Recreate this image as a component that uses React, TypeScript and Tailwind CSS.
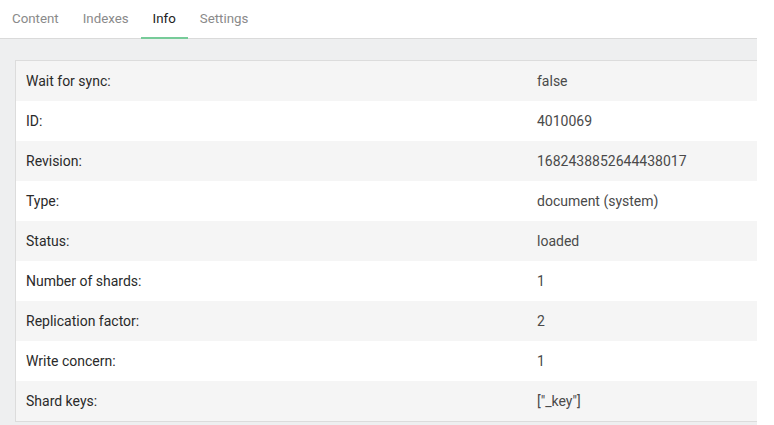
const tabs = ['Content', 'Indexes', 'Info', 'Settings'];

const rows: [string, string][] = [
  ['Wait for sync:', 'false'],
  ['ID:', '4010069'],
  ['Revision:', '1682438852644438017'],
  ['Type:', 'document (system)'],
  ['Status:', 'loaded'],
  ['Number of shards:', '1'],
  ['Replication factor:', '2'],
  ['Write concern:', '1'],
  ['Shard keys:', '["_key"]'],
];

export default function App() {
  return (
    <div className="flex h-[425px] w-[774px] bg-white font-['Roboto',sans-serif]">
      <div className="flex w-[757px] flex-col overflow-hidden">
        {/* tab bar */}
        <div className="flex h-[39px] shrink-0 border-b border-[#dadada] bg-white">
          {tabs.map(tab => (
            <div
              key={tab}
              className={
                tab === 'Info'
                  ? 'h-[39px] border-b-2 border-[#77cb99] px-3 pt-[9px] text-[13.3px] text-[#222]'
                  : 'h-[39px] px-3 pt-[9px] text-[13.3px] text-[#8a8a8a]'
              }
            >
              {tab}
            </div>
          ))}
        </div>

        {/* info table */}
        <div className="flex-1 bg-[#eeeff0] pl-[15px] pt-[21px]">
          <div className="w-[760px] border border-[#dcdcdc] bg-white">
            {rows.map(([label, value], i) => (
              <div
                key={label}
                className={`flex h-10 items-center text-sm ${i % 2 === 0 ? 'bg-[#f5f5f5]' : 'bg-white'}`}
              >
                <div className="w-[521px] pl-[10px] text-[#2a2a2a]">{label}</div>
                <div className="text-[#4a4a4a]">{value}</div>
              </div>
            ))}
          </div>
        </div>
      </div>
      <div className="flex-1 bg-white" />
    </div>
  );
}
